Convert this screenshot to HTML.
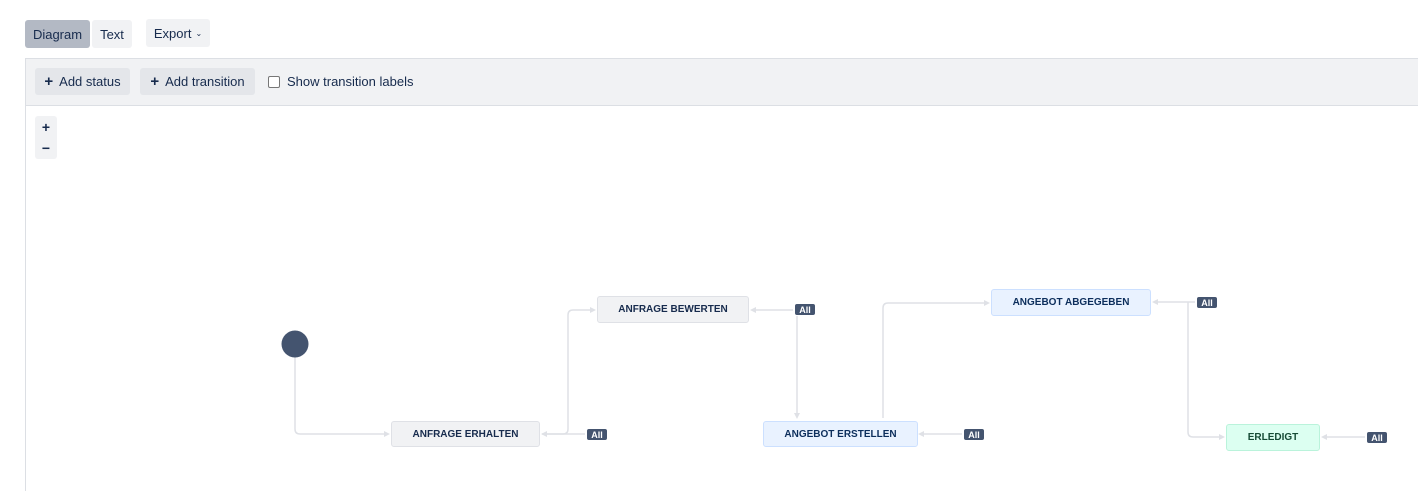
<!DOCTYPE html>
<html><head><style>
body{margin:0;width:1418px;height:491px;background:#fff;font-family:"Liberation Sans",sans-serif;position:relative;overflow:hidden;color:#172b4d}
.b{position:absolute;font-size:13px;display:flex;align-items:center;justify-content:center;border-radius:3px;background:#f1f2f4;color:#172b4d}
.n{position:absolute;font-size:10px;font-weight:bold;display:flex;align-items:center;justify-content:center;border-radius:3px;box-sizing:border-box;background:#f1f2f4;border:1px solid #dfe1e6;color:#172b4d}
.bl{background:#e9f2ff;border-color:#cce0ff;color:#0c2e5c}
.g{background:#dcfff1;border-color:#baf3db;color:#164b35}
.a{position:absolute;width:20px;height:11px;background:#44546f;color:#fff;font-size:9px;font-weight:bold;border-radius:2px;display:flex;align-items:center;justify-content:center}
</style></head><body>
<div class="b" style="left:25px;top:20px;width:65px;height:28px;background:#b3b9c4">Diagram</div>
<div class="b" style="left:92px;top:20px;width:40px;height:28px">Text</div>
<div class="b" style="left:146px;top:19px;width:64px;height:28px">Export <span style="font-size:8px;margin-left:4px">&#8964;</span></div>
<div style="position:absolute;left:25px;top:58px;width:1400px;height:46px;background:#f1f2f4;border-top:1px solid #dcdfe4;border-bottom:1px solid #dcdfe4;border-left:1px solid #dcdfe4"></div>
<div class="b" style="left:35px;top:68px;width:95px;height:27px;background:#e4e6ea"><b style="margin-right:6px;font-size:15px">+</b>Add status</div>
<div class="b" style="left:140px;top:68px;width:115px;height:27px;background:#e4e6ea"><b style="margin-right:6px;font-size:15px">+</b>Add transition</div>
<div style="position:absolute;left:268px;top:76px;width:10px;height:10px;border:1px solid #777;border-radius:2px;background:#fff"></div>
<div style="position:absolute;left:287px;top:74px;font-size:13px">Show transition labels</div>
<div style="position:absolute;left:25px;top:105px;width:1px;height:386px;background:#dcdfe4"></div>
<div class="b" style="left:35px;top:116px;width:22px;height:43px;flex-direction:column;font-weight:bold;font-size:14px;line-height:21px">+<br>&minus;</div>
<svg style="position:absolute;left:0;top:0" width="1418" height="491">
<g fill="none" stroke="#dfe1e6" stroke-width="1.5">
<path d="M295 357V429q0 5 5 5H386"/>
<path d="M585 434H545"/>
<path d="M542 434h21q5 0 5-5V315q0-5 5-5H592"/>
<path d="M793 310H754"/>
<path d="M797 316V414"/>
<path d="M962 434H922"/>
<path d="M883 418V308q0-5 5-5H986"/>
<path d="M1195 302H1156"/>
<path d="M1188 302V432q0 5 5 5H1221"/>
<path d="M1365 437H1325"/>
</g>
<g fill="#dfe1e6">
<path d="M390 434l-6-3v6z"/><path d="M541 434l6-3v6z"/><path d="M596 310l-6-3v6z"/><path d="M750 310l6-3v6z"/><path d="M797 419l-3-6h6z"/><path d="M918 434l6-3v6z"/><path d="M990 303l-6-3v6z"/><path d="M1152 302l6-3v6z"/><path d="M1225 437l-6-3v6z"/><path d="M1321 437l6-3v6z"/>
</g>
<circle cx="295" cy="344" r="13.5" fill="#44546f"/>
</svg>
<div class="n" style="left:391px;top:421px;width:149px;height:26px">ANFRAGE ERHALTEN</div>
<div class="n" style="left:597px;top:296px;width:152px;height:27px">ANFRAGE BEWERTEN</div>
<div class="n bl" style="left:763px;top:421px;width:155px;height:26px">ANGEBOT ERSTELLEN</div>
<div class="n bl" style="left:991px;top:289px;width:160px;height:27px">ANGEBOT ABGEGEBEN</div>
<div class="n g" style="left:1226px;top:424px;width:94px;height:27px">ERLEDIGT</div>
<div class="a" style="left:587px;top:429px">All</div>
<div class="a" style="left:795px;top:304px">All</div>
<div class="a" style="left:964px;top:429px">All</div>
<div class="a" style="left:1197px;top:297px">All</div>
<div class="a" style="left:1367px;top:432px">All</div>
</body></html>
